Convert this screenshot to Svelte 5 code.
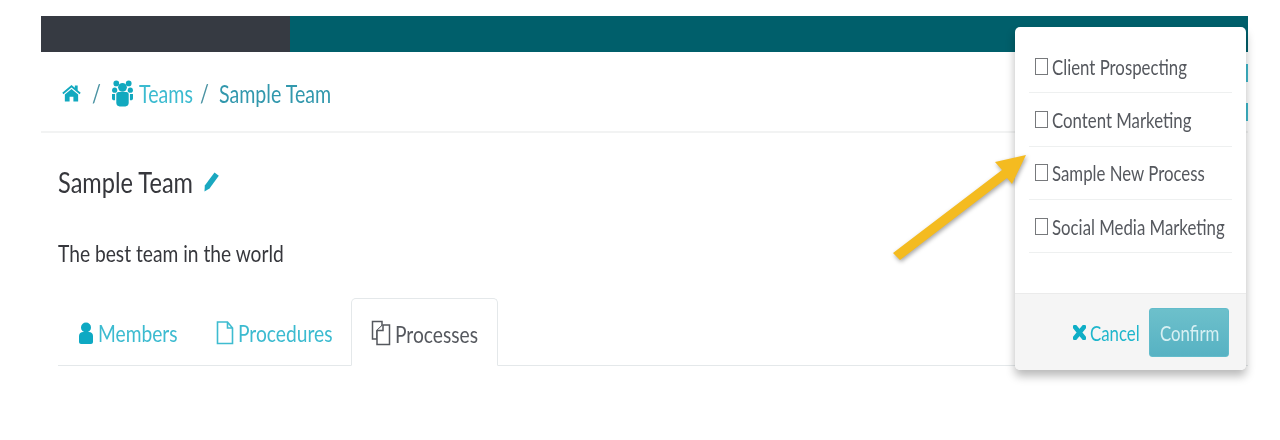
<script>
  // widths are what each label takes up once squeezed by .sq
  const processes = [
    { name: 'Client Prospecting', width: 133 },
    { name: 'Content Marketing', width: 139 },
    { name: 'Sample New Process', width: 152 },
    { name: 'Social Media Marketing', width: 173 }
  ]
</script>

<div class="page">
  <div class="topbar">
    <div class="topbar-side"></div>
  </div>

  <nav class="crumbs">
    <svg class="home" viewBox="0 0 20 18" width="19" height="18" aria-hidden="true">
      <path d="M10 0.5 0.3 8.8l1.2 1.5L10 3.200l8.500 7.100 1.200-1.500-3.200-2.700V1h-3v2.600z" />
      <path d="M10 4.800 3 10.600V18h5v-5h4v5h5v-7.400z" />
    </svg>
    <span class="sep first">/</span>
    <svg class="group" viewBox="0 0 22 28" width="21" height="27" aria-hidden="true">
      <circle cx="11" cy="7.500" r="4.600" />
      <circle cx="4.500" cy="3.500" r="3" />
      <circle cx="17.500" cy="3.500" r="3" />
      <circle cx="2.800" cy="10.500" r="2.700" />
      <circle cx="19.200" cy="10.500" r="2.700" />
      <path d="M4.500 15c0-1.500 1-2.500 2.500-2.500h8c1.500 0 2.500 1 2.500 2.500v9c0 2-1.500 3.500-3.500 3.500H8c-2 0-3.500-1.500-3.500-3.500z" />
      <path d="M0 14.500h3.200V21H1.500C.5 21 0 20 0 19zM22 14.500h-3.200V21h1.700c1 0 1.500-1 1.500-2z" />
    </svg>
    <span class="sq link w-teams">Teams</span>
    <span class="sep">/</span>
    <span class="sq current w-current">Sample Team</span>
    <div class="actions">
      <span></span>
      <span></span>
    </div>
  </nav>

  <main class="body">
    <h1>
      <span class="sq w-title">Sample Team</span>
      <svg class="pencil" viewBox="0 0 15 20" width="15" height="20" aria-hidden="true">
        <path d="M10.500 0.500 14.800 3.800 5.500 16.500 0.500 19.500 0.800 13.500z" />
      </svg>
    </h1>
    <p><span class="sq w-desc">The best team in the world</span></p>

    <div class="tabs">
      <div class="tab">
        <svg viewBox="0 0 14 22" width="14" height="22" aria-hidden="true">
          <circle cx="7" cy="5.500" r="5" />
          <path d="M0 14c0-2.500 2-4 4-4h6c2 0 4 1.500 4 4v6c0 1-1 2-2 2H2c-1 0-2-1-2-2z" />
        </svg>
        <span class="sq w-members">Members</span>
      </div>
      <div class="tab second">
        <svg class="outline" viewBox="0 0 18 24" width="18" height="24" aria-hidden="true">
          <path d="M1.500 1h10l5 6v15.500h-15zM11.500 1v6h5" />
        </svg>
        <span class="sq w-procedures">Procedures</span>
      </div>
      <div class="tab active">
        <svg class="copy" viewBox="0 0 20 26" width="20" height="26" aria-hidden="true">
          <path d="M1.500 1.500H11V6L6 11v8H1.500z" />
          <path d="M6 10.500 12 5h6.500v19.500H6z" />
          <path d="M12 5v5.500H6" />
        </svg>
        <span class="sq w-processes">Processes</span>
      </div>
    </div>
  </main>

  <div class="popover">
    <ul>
      {#each processes as item}
        <li><span class="box"></span><span class="sq" style:width={item.width + 'px'}>{item.name}</span></li>
      {/each}
    </ul>
    <footer>
      <span class="cancel">
        <svg viewBox="0 0 13 15" width="13" height="15" aria-hidden="true">
          <path d="M2 2 11 13M11 2 2 13" />
        </svg>
        <span class="sq w-cancel">Cancel</span>
      </span>
      <button><span class="sq w-confirm">Confirm</span></button>
    </footer>
  </div>

  <svg class="arrow" viewBox="0 0 140 120" width="140" height="120" aria-hidden="true">
    <path d="M5 112 114 29 107 21 138 14 124 43 119 37 12 119z" />
  </svg>
</div>

<style>
  :global(body) {
    margin: 0;
    background: #fff;
  }
  .page {
    position: relative;
    width: 1280px;
    height: 440px;
    padding: 16px 32px 0 41px;
    box-sizing: border-box;
    overflow: hidden;
    font-family: Lato, "Noto Sans", sans-serif;
    color: #36373c;
    filter: blur(0.35px);
  }
  /* the screenshot is squeezed sideways, Lato alone comes out too wide */
  .sq {
    display: inline-block;
    white-space: nowrap;
    transform: scaleX(0.8);
    transform-origin: 0 50%;
  }
  .w-teams { width: 53px; }
  .w-current { width: 112px; }
  .w-title { width: 136px; }
  .w-desc { width: 225px; }
  .w-members { width: 78px; }
  .w-procedures { width: 93px; }
  .w-processes { width: 82px; }
  .w-cancel { width: 48px; }
  .w-confirm { width: 58px; }

  .topbar {
    height: 36px;
    background: #005f6b;
  }
  .topbar-side {
    width: 249px;
    height: 100%;
    background: #363a42;
  }
  .crumbs {
    display: flex;
    align-items: center;
    height: 81px;
    padding: 3px 0 0 21px;
    border-bottom: 2px solid #f2f3f3;
    font-size: 24.500px;
    color: #2b8ea0;
    box-sizing: border-box;
  }
  .crumbs svg {
    fill: #12a9bf;
    flex: none;
  }
  .sep {
    margin: 0 9px 0 7px;
    color: #4b93a3;
    transform: scaleX(0.8);
  }
  .sep.first {
    margin: 0 10px 0 10px;
  }
  .link {
    color: #3cbbd0;
    margin-left: 6px;
  }
  .current {
    color: #3298ad;
  }
  .actions {
    display: flex;
    flex-direction: column;
    gap: 21px;
    margin-left: auto;
    margin-top: -2px;
  }
  .actions span {
    width: 30px;
    height: 18px;
    background: #3fb9cc;
  }
  .body {
    padding-left: 17px;
  }
  h1 {
    display: flex;
    align-items: center;
    gap: 10px;
    margin: 30px 0 0;
    font-size: 29.500px;
    line-height: 38px;
    font-weight: 400;
  }
  .pencil {
    fill: #1aa8c0;
  }
  p {
    margin: 37px 0 0;
    font-size: 24px;
    line-height: 30px;
  }
  .tabs {
    display: flex;
    align-items: flex-end;
    height: 67px;
    margin-top: 30px;
    border-bottom: 1px solid #e4e8ea;
  }
  .tab {
    display: flex;
    align-items: center;
    gap: 5px;
    height: 67px;
    padding: 2px 19px 0 21px;
    font-size: 24px;
    color: #3cbbd0;
    box-sizing: border-box;
  }
  .tab.second {
    gap: 4px;
    padding-right: 20px;
  }
  .tab svg {
    fill: #0ea9c3;
    flex: none;
  }
  .tab svg.outline {
    fill: none;
    stroke: #3ebcd0;
    stroke-width: 1.600;
  }
  .tab.active {
    gap: 4px;
    margin-bottom: -1px;
    height: 68px;
    padding: 2px 20px 0 19px;
    color: #55585e;
    background: #fff;
    border: 1px solid #e4e8ea;
    border-bottom-color: #fff;
    border-radius: 5px 5px 0 0;
  }
  .tab svg.copy {
    fill: #fff;
    stroke: #55585e;
    stroke-width: 1.500;
  }
  .popover {
    position: absolute;
    left: 1015px;
    top: 27px;
    width: 231px;
    height: 343px;
    display: flex;
    flex-direction: column;
    background: #fff;
    border-radius: 5px;
    box-shadow: 0 6px 10px rgba(0, 0, 0, 0.28);
    overflow: hidden;
  }
  ul {
    flex: 1;
    list-style: none;
    margin: 0;
    padding: 13px 14px 0;
  }
  li {
    display: flex;
    align-items: center;
    height: 53.300px;
    border-bottom: 1px solid #eef0f0;
    box-sizing: border-box;
    font-size: 21px;
    color: #55585e;
  }
  .box {
    width: 11px;
    height: 15px;
    margin: 0 4px 0 6px;
    border: 1px solid #77797c;
    flex: none;
  }
  footer {
    display: flex;
    align-items: center;
    justify-content: flex-end;
    gap: 11px;
    height: 77px;
    padding-right: 17px;
    background: #f5f5f5;
    border-top: 1px solid #ebebeb;
    box-sizing: border-box;
  }
  .cancel {
    display: flex;
    align-items: center;
    gap: 4px;
    font-size: 21px;
    color: #1fb6cc;
  }
  .cancel svg {
    fill: none;
    stroke: #0eaec6;
    stroke-width: 4.500;
    stroke-linecap: round;
  }
  button {
    display: flex;
    align-items: center;
    justify-content: center;
    width: 80px;
    height: 49px;
    padding: 0;
    font: inherit;
    font-size: 21px;
    color: #d8f0f3;
    background: linear-gradient(#6dc0cb, #57b2c3);
    border: 1px solid #62bccb;
    border-radius: 3px;
  }
  .arrow {
    position: absolute;
    left: 888px;
    top: 141px;
    filter: drop-shadow(1px 2px 2px rgba(0, 0, 0, 0.35));
  }
  .arrow path {
    fill: #f4bb20;
  }
</style>
